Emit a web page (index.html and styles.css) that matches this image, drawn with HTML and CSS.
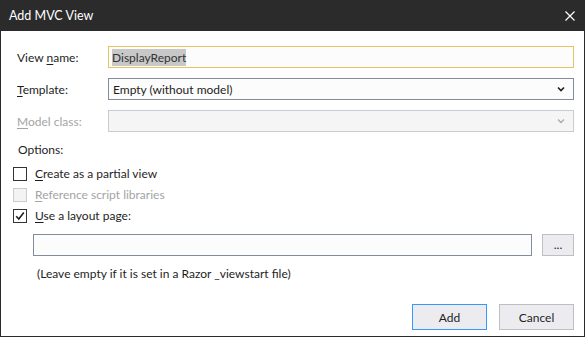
FILE: index.html
```html
<!DOCTYPE html>
<html lang="en">
<head>
  <meta charset="UTF-8" />
  <title>Add MVC View</title>
  <link rel="stylesheet" href="styles.css">
</head>
<body>
  <div class="dialog">
    <header class="titlebar">
      <span class="title">Add MVC View</span>
      <svg class="close" width="10" height="10" viewBox="0 0 10 10">
        <path d="M0.5 0.5 L9.5 9.5 M9.5 0.5 L0.5 9.5" stroke="#ffffff" stroke-width="1.2" fill="none" />
      </svg>
    </header>
    <main class="content">
      <div class="field">
        <label class="field-label">View <u>n</u>ame:</label>
        <div class="textbox focused"><span class="selected">DisplayReport</span></div>
      </div>
      <div class="field">
        <label class="field-label"><u>T</u>emplate:</label>
        <div class="textbox combo">
          <span>Empty (without model)</span>
          <svg class="chevron" width="8" height="6" viewBox="0 0 8 6">
            <path d="M1 1.5 L4 4.5 L7 1.5" stroke="#1e1e1e" stroke-width="1.6" fill="none" />
          </svg>
        </div>
      </div>
      <div class="field disabled">
        <label class="field-label"><u>M</u>odel class:</label>
        <div class="textbox combo">
          <span></span>
          <svg class="chevron" width="8" height="6" viewBox="0 0 8 6">
            <path d="M1 1.5 L4 4.5 L7 1.5" stroke="#a9abb0" stroke-width="1.4" fill="none" />
          </svg>
        </div>
      </div>

      <div class="options-label">Options:</div>
      <div class="check-row">
        <span class="checkbox"></span>
        <span><u>C</u>reate as a partial view</span>
      </div>
      <div class="check-row disabled">
        <span class="checkbox"></span>
        <span><u>R</u>eference script libraries</span>
      </div>
      <div class="check-row">
        <span class="checkbox">
          <svg width="12" height="12" viewBox="0 0 12 12">
            <path d="M2.2 6.3 L4.8 9 L9.8 2.6" stroke="#1e1e1e" stroke-width="1.6" fill="none" />
          </svg>
        </span>
        <span><u>U</u>se a layout page:</span>
      </div>

      <div class="layout-row">
        <div class="textbox"></div>
        <button class="btn browse">...</button>
      </div>
      <div class="hint">(Leave empty if it is set in a Razor _viewstart file)</div>

      <div class="actions">
        <button class="btn primary">Add</button>
        <button class="btn">Cancel</button>
      </div>
    </main>
  </div>
</body>
</html>
```

FILE: styles.css
```css
/* Colours */
:root {
  --frame: #2b2b2b;
  --text: #1e1e1e;
  --muted: #a2a4a5;
  --box-border: #828c9b;
  --box-bg: #fcfcfc;
  --btn-bg: #ececf0;
  --btn-border: #bfbfc3;
  --font: "Lato", "Noto Sans", sans-serif;
}
/* Base */
body {
  margin: 0;
  background: #ffffff;
  font-family: var(--font);
  font-size: 12px;
  color: var(--text);
}
u {
  text-decoration-thickness: 1px;
  text-underline-offset: 2px;
}
.dialog {
  width: 583px;
  height: 336px;
  border: 1px solid var(--frame);
  border-top: none;
  display: flex;
  flex-direction: column;
  background: #ffffff;
}
/* Title bar */
.titlebar {
  height: 31px;
  background: var(--frame);
  color: #ffffff;
  display: flex;
  align-items: center;
  justify-content: space-between;
  padding: 0 10px 0 9px;
  margin: 0 -1px;
  font-size: 12.5px;
}
/* Content */
.content {
  padding: 15px 10px 0 12px;
  display: flex;
  flex-direction: column;
}
.field {
  display: flex;
  align-items: center;
  margin-bottom: 10px;
}
.field-label {
  width: 91px;
  padding-left: 4px;
  flex-shrink: 0;
}
.textbox {
  flex: 1;
  height: 20px;
  border: 1px solid var(--box-border);
  background: var(--box-bg);
  display: flex;
  align-items: center;
  padding: 0 4px;
}
.textbox.focused {
  border-color: #e5c365;
}
.selected {
  background: #c8c8c8;
  color: #333333;
  padding: 1px 0;
  margin-left: -1px;
}
.combo {
  justify-content: space-between;
  padding-right: 8px;
}
.disabled {
  color: var(--muted);
}
.disabled .textbox {
  border-color: #c8ccd2;
  background: #f5f5f5;
}
/* Options */
.options-label {
  margin-left: 5px;
  line-height: 16px;
}
.check-row {
  display: flex;
  align-items: center;
  height: 21px;
}
.options-label + .check-row {
  margin-top: 5px;
}
.checkbox {
  width: 12px;
  height: 12px;
  border: 1px solid #333337;
  background: #ffffff;
  margin-right: 8px;
  display: flex;
  align-items: center;
  justify-content: center;
}
.check-row.disabled .checkbox {
  border-color: #cccccc;
  background: #f3f3f3;
}
.layout-row {
  display: flex;
  margin: 8px 0 0 20px;
  gap: 10px;
}
.hint {
  margin: 10px 0 0 24px;
  line-height: 16px;
}
/* Buttons */
.btn {
  font-family: var(--font);
  font-size: 12px;
  color: var(--text);
  background: var(--btn-bg);
  border: 1px solid var(--btn-border);
  padding: 0;
  height: 26px;
  width: 75px;
}
.btn.browse {
  width: 32px;
  height: 22px;
  line-height: 14px;
}
.btn.primary {
  border-color: #3399ff;
}
.actions {
  display: flex;
  justify-content: flex-end;
  gap: 12px;
  margin-top: 22px;
}
```
